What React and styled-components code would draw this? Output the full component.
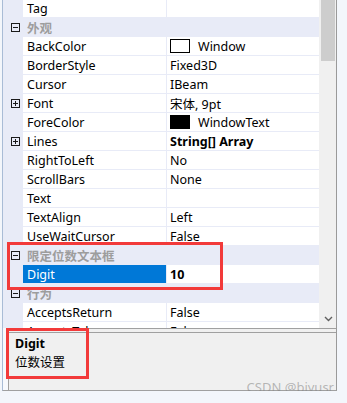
import React from 'react';
import styled, { createGlobalStyle } from 'styled-components';

const GlobalStyle = createGlobalStyle`
  html, body {
    margin: 0;
    padding: 0;
    background: #f3f6fb;
  }
  body {
    font-family: "Noto Sans", "Noto Sans CJK SC", sans-serif;
    font-size: 12.5px;
  }
`;

const uiFont = `"Noto Sans", "Noto Sans CJK SC", sans-serif`;

const rows = [
  { name: 'Tag', value: '' },
  { category: '外观' },
  { name: 'BackColor', value: 'Window', swatch: '#ffffff' },
  { name: 'BorderStyle', value: 'Fixed3D' },
  { name: 'Cursor', value: 'IBeam' },
  { name: 'Font', value: '宋体, 9pt', expandable: true },
  { name: 'ForeColor', value: 'WindowText', swatch: '#000000' },
  { name: 'Lines', value: 'String[] Array', bold: true, expandable: true },
  { name: 'RightToLeft', value: 'No' },
  { name: 'ScrollBars', value: 'None' },
  { name: 'Text', value: '' },
  { name: 'TextAlign', value: 'Left' },
  { name: 'UseWaitCursor', value: 'False' },
  { category: '限定位数文本框' },
  { name: 'Digit', value: '10', bold: true, selected: true },
  { category: '行为' },
  { name: 'AcceptsReturn', value: 'False' },
  { name: 'AcceptsTab', value: 'False' },
];

const Frame = styled.div`
  position: relative;
  width: 333px;
  height: 390px;
  margin-left: 2px;
  border-left: 1px solid #a9bcd6;
  border-right: 1px solid #9a9a9a;
  border-bottom: 1px solid #a0a0a0;
  display: flex;
  flex-direction: column;
  background: #f7f9fd;
`;

const GridArea = styled.div`
  height: 328px;
  display: flex;
  flex-direction: row;
  background: #ffffff;
`;

const GridBody = styled.div`
  flex: 1;
  overflow: hidden;
  background: #e8ebf7;
`;

const RowList = styled.div`
  margin-top: -1px;
`;

const Row = styled.div`
  display: flex;
  height: 19px;
  box-sizing: border-box;
  align-items: stretch;
`;

const Gutter = styled.div`
  width: 20px;
  flex: none;
  background: #e8ebf7;
  display: flex;
  align-items: center;
  justify-content: flex-start;
  padding-left: 8px;
  box-sizing: border-box;
`;

const ExpandBox = styled.span`
  position: relative;
  width: 9px;
  height: 9px;
  box-sizing: border-box;
  border: 1px solid #1a1a1a;
  display: block;
  &::before {
    content: '';
    position: absolute;
    left: 1px;
    top: 3px;
    width: 5px;
    height: 1px;
    background: #1a1a1a;
  }
  &::after {
    content: '';
    display: ${({ $plus }) => ($plus ? 'block' : 'none')};
    position: absolute;
    left: 3px;
    top: 1px;
    width: 1px;
    height: 5px;
    background: #1a1a1a;
  }
`;

const NameCell = styled.div`
  width: 144px;
  flex: none;
  box-sizing: border-box;
  padding-left: 4px;
  display: flex;
  align-items: center;
  color: ${({ $selected }) => ($selected ? '#ffffff' : '#000000')};
  background: ${({ $selected }) => ($selected ? '#0078d7' : '#ffffff')};
  border-bottom: 1px solid #e8ebf7;
  border-right: 1px solid #e8ebf7;
  white-space: nowrap;
`;

const ValueCell = styled.div`
  flex: 1;
  box-sizing: border-box;
  padding-left: 3px;
  display: flex;
  align-items: center;
  gap: 8px;
  background: #ffffff;
  border-bottom: 1px solid #e8ebf7;
  font-weight: ${({ $bold }) => ($bold ? 700 : 400)};
  color: #000000;
  white-space: nowrap;
`;

const Swatch = styled.span`
  width: 20px;
  height: 14px;
  box-sizing: border-box;
  border: 1px solid #000000;
  background: ${({ $color }) => $color};
  flex: none;
`;

const CategoryLabel = styled.div`
  flex: 1;
  padding-left: 4px;
  display: flex;
  align-items: center;
  color: #9d9d9d;
  font-weight: 700;
`;

const Scrollbar = styled.div`
  width: 16px;
  flex: none;
  background: #f0f0f0;
  display: flex;
  flex-direction: column;
  align-items: center;
  border-left: 1px solid #f0f0f0;
`;

const Thumb = styled.div`
  width: 14px;
  height: 61px;
  background: #cdcdcd;
`;

const Track = styled.div`
  flex: 1;
`;

const ArrowButton = styled.div`
  height: 17px;
  width: 16px;
  display: flex;
  align-items: center;
  justify-content: center;
  margin-bottom: 1px;
`;

const Splitter = styled.div`
  height: 3px;
  border-top: 1px solid #a0a0a0;
  border-bottom: 1px solid #a0a0a0;
  background: #f0f0f0;
  margin-left: 5px;
`;

const Description = styled.div`
  flex: 1;
  margin-left: 5px;
  border-left: 1px solid #a0a0a0;
  background: #f0f0f0;
  padding: 1px 0 0 6px;
  display: flex;
  flex-direction: column;
`;

const DescTitle = styled.div`
  font-weight: 700;
  height: 19px;
  line-height: 19px;
  color: #000;
`;

const DescText = styled.div`
  height: 19px;
  line-height: 19px;
  color: #000;
`;

const Highlight = styled.div`
  position: absolute;
  left: ${({ $x }) => $x}px;
  top: ${({ $y }) => $y}px;
  width: ${({ $w }) => $w}px;
  height: ${({ $h }) => $h}px;
  box-sizing: border-box;
  border: 3px solid #f23a3a;
  pointer-events: none;
`;

const Watermark = styled.div`
  position: absolute;
  right: 2px;
  bottom: -6px;
  font-family: ${uiFont};
  font-size: 13px;
  color: rgba(130, 130, 130, 0.55);
  white-space: nowrap;
`;

const PropertyRow = ({ row }) => {
  if (row.category) {
    return (
      <Row>
        <Gutter>
          <ExpandBox />
        </Gutter>
        <CategoryLabel>{row.category}</CategoryLabel>
      </Row>
    );
  }
  return (
    <Row>
      <Gutter>{row.expandable && <ExpandBox $plus />}</Gutter>
      <NameCell $selected={row.selected}>{row.name}</NameCell>
      <ValueCell $bold={row.bold}>
        {row.swatch && <Swatch $color={row.swatch} />}
        {row.value}
      </ValueCell>
    </Row>
  );
};

const App = () => {
  return (
    <>
      <GlobalStyle />
      <Frame>
        <GridArea>
          <GridBody>
            <RowList>
              {rows.map((row, i) => (
                <PropertyRow key={i} row={row} />
              ))}
            </RowList>
          </GridBody>
          <Scrollbar>
            <Thumb />
            <Track />
            <ArrowButton>
              <svg width="9" height="6" viewBox="0 0 9 6">
                <path d="M1 1 L4.5 4.5 L8 1" fill="none" stroke="#606060" strokeWidth="1.4" />
              </svg>
            </ArrowButton>
          </Scrollbar>
        </GridArea>
        <Splitter />
        <Description>
          <DescTitle>Digit</DescTitle>
          <DescText>位数设置</DescText>
        </Description>
        <Highlight $x={4} $y={242} $w={216} $h={48} />
        <Highlight $x={3} $y={328} $w={83} $h={51} />
        <Watermark>CSDN @biyusr</Watermark>
      </Frame>
    </>
  );
};

export default App;
